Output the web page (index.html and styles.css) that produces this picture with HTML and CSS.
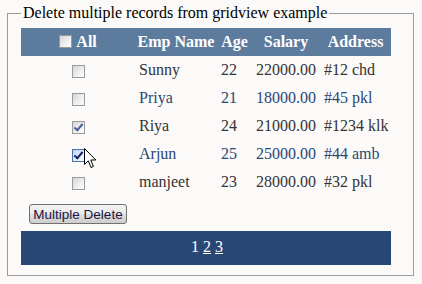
FILE: index.html
```html
<!DOCTYPE html>
<html lang="en">
<head>
  <meta charset="UTF-8" />
  <title>Delete multiple records</title>
  <link rel="stylesheet" href="styles.css">
</head>
<body>

  <fieldset class="box">
    <legend>Delete multiple records from gridview example</legend>

    <!-- Grid -->
    <table class="grid">
      <colgroup>
        <col class="c-check"><col class="c-name"><col class="c-age"><col class="c-salary"><col class="c-address">
      </colgroup>
      <thead>
        <tr>
          <th><input type="checkbox" class="cb"> All</th>
          <th>Emp Name</th>
          <th>Age</th>
          <th>Salary</th>
          <th>Address</th>
        </tr>
      </thead>
      <tbody>
        <tr class="row">
          <td class="check"><input type="checkbox" class="cb"></td>
          <td>Sunny</td><td>22</td><td>22000.00</td><td>#12 chd</td>
        </tr>
        <tr class="alt">
          <td class="check"><input type="checkbox" class="cb"></td>
          <td>Priya</td><td>21</td><td>18000.00</td><td>#45 pkl</td>
        </tr>
        <tr class="row">
          <td class="check"><input type="checkbox" class="cb" checked></td>
          <td>Riya</td><td>24</td><td>21000.00</td><td>#1234 klk</td>
        </tr>
        <tr class="alt">
          <td class="check">
            <span class="hover-wrap">
              <input type="checkbox" class="cb hover" checked>
              <!-- mouse pointer -->
              <svg class="pointer" width="13" height="21" viewBox="0 0 13 21">
                <path d="M0.5 0.5 L0.5 16.5 L4.3 12.8 L7 19.5 L9.4 18.5 L6.8 12 L11.8 12 Z" fill="#fff" stroke="#000" stroke-width="1" stroke-linejoin="miter"/>
              </svg>
            </span>
          </td>
          <td>Arjun</td><td>25</td><td>25000.00</td><td>#44 amb</td>
        </tr>
        <tr class="row">
          <td class="check"><input type="checkbox" class="cb"></td>
          <td>manjeet</td><td>23</td><td>28000.00</td><td>#32 pkl</td>
        </tr>
      </tbody>
    </table>

    <button class="btn">Multiple Delete</button>

    <div class="pager">
      <span>1</span> <a href="#">2</a> <a href="#">3</a>
    </div>
  </fieldset>

</body>
</html>
```

FILE: styles.css
```css
body {
  margin: 0;
  background: #fbfaf8;
  font-family: "Liberation Serif", "Times New Roman", serif;
  font-size: 16px;
  overflow: hidden;
}

.box {
  width: 370px;
  margin: 4px 0 0 7px;
  padding: 6px 22px 10px 13px;
  border: 1px solid #9c9c9c;
}

.box legend {
  padding: 0 2px;
  margin-left: 0;
  color: #000;
}

/* Grid */
.grid {
  width: 370px;
  border-collapse: collapse;
  table-layout: fixed;
  font-family: "Liberation Serif", "Times New Roman", serif;
  font-size: 16px;
}

.c-check { width: 114px; }
.c-name { width: 82px; }
.c-age { width: 35px; }
.c-salary { width: 68px; }
.c-address { width: 71px; }

.grid th {
  background: #5d7b9d;
  color: #fff;
  font-weight: bold;
  height: 28px;
  padding: 0;
  text-align: center;
  white-space: nowrap;
}

.grid th .cb {
  vertical-align: -1px;
  margin-right: 1px;
}

.grid td {
  height: 28px;
  padding: 0 0 0 4px;
  white-space: nowrap;
  font-family: "Liberation Serif", "Times New Roman", serif;
}

.grid td.check {
  text-align: center;
  padding: 0;
}

.row td { color: #333333; }
.alt td { color: #284775; }

/* Checkboxes */
.cb {
  appearance: none;
  -webkit-appearance: none;
  position: relative;
  width: 13px;
  height: 13px;
  margin: 0;
  border: 1px solid #9a9a9a;
  background: linear-gradient(135deg, #d6d6d6 0%, #eeeeee 55%, #ffffff 100%);
  vertical-align: middle;
  box-sizing: border-box;
}

.cb:checked::after {
  content: "";
  position: absolute;
  left: 3px;
  top: 0px;
  width: 3px;
  height: 7px;
  border: solid #4a5f96;
  border-width: 0 2px 2px 0;
  transform: rotate(40deg);
}

.cb.hover {
  border-color: #4b6fa8;
  background: linear-gradient(135deg, #b9d3f2 0%, #e2eefc 60%, #ffffff 100%);
}

.cb.hover:checked::after {
  border-color: #1a2366;
}

.hover-wrap {
  position: relative;
  display: inline-block;
  line-height: 0;
  vertical-align: middle;
}

.pointer {
  position: absolute;
  left: 12px;
  top: -1px;
}

/* Button */
.btn {
  display: block;
  width: 98px;
  margin: 8px 0 0 8px;
  height: 20px;
  padding: 0;
  font-family: "Liberation Sans", Arial, sans-serif;
  font-size: 13.5px;
  color: #1b1340;
  border: 1px solid #707070;
  border-radius: 3px;
  background: linear-gradient(#f2f2f2 0%, #ebebeb 50%, #dddddd 51%, #cfcfcf 100%);
}

/* Pager */
.pager {
  margin-top: 7px;
  height: 34px;
  line-height: 32px;
  background: #284775;
  color: #fff;
  text-align: center;
  padding-left: 2px;
  box-sizing: border-box;
}

.pager a {
  color: #fff;
}
```
